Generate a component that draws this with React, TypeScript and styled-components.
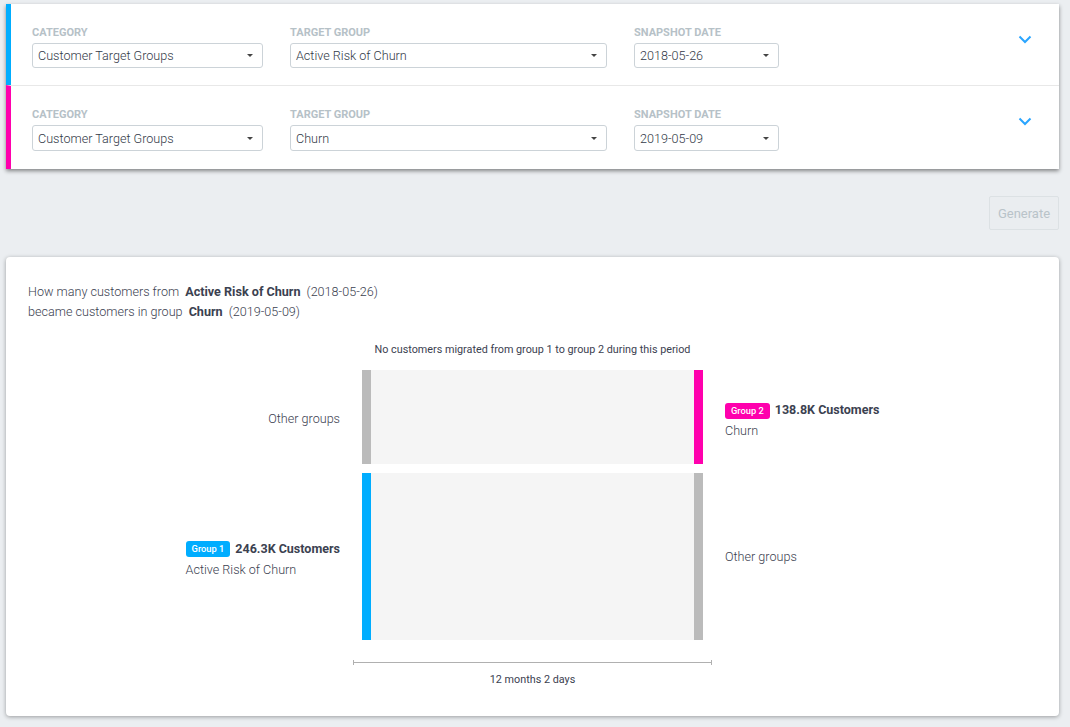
import React from "react";
import styled, { createGlobalStyle } from "styled-components";

const Global = createGlobalStyle`
  html, body { margin: 0; padding: 0; background: #ebeef1; }
  body { font-family: Roboto, "Liberation Sans", sans-serif; color: #3b4150; }
  * { box-sizing: border-box; }
`;

const Page = styled.div`
  width: 1070px;
  height: 727px;
  padding: 4px 11px 0 6px;
  overflow: hidden;
`;

const FilterCard = styled.section`
  background: #fff;
  box-shadow: 0 2px 4px rgba(0, 0, 0, 0.45);
`;

const FilterRow = styled.div<{ $accent: string; $height: number }>`
  display: flex;
  height: ${(p) => p.$height}px;
  padding: 22px 0 0 21px;
  border-left: 5px solid ${(p) => p.$accent};
  & + & {
    border-top: 1px solid #e8e8e8;
  }
`;

const Field = styled.div<{ $width: number }>`
  width: ${(p) => p.$width}px;
  margin-right: 27px;
  flex: none;
`;

const FieldLabel = styled.div`
  font-size: 11px;
  line-height: 14px;
  font-weight: 700;
  color: #b6c1c7;
  margin-bottom: 3px;
`;

const Select = styled.div<{ $height: number }>`
  height: ${(p) => p.$height}px;
  display: flex;
  align-items: center;
  justify-content: space-between;
  padding: 0 9px 0 5px;
  border: 1px solid #ccd3d8;
  border-radius: 3px;
  font-size: 12.6px;
  font-weight: 300;
  color: #333a48;
`;

const Caret = styled.span`
  width: 0;
  height: 0;
  border-left: 3.5px solid transparent;
  border-right: 3.5px solid transparent;
  border-top: 3.5px solid #444;
`;

const ExpandButton = styled.button`
  margin: 8px 27px 0 auto;
  padding: 0;
  border: 0;
  background: none;
  width: 14px;
  height: 10px;
  display: flex;
  color: #2aa5ff;
`;

const Actions = styled.div`
  display: flex;
  justify-content: flex-end;
  margin-top: 27px;
`;

const GenerateButton = styled.button`
  width: 70px;
  height: 34px;
  padding: 0;
  border: 1px solid #dce1e4;
  border-radius: 2px;
  background: #eaedf0;
  font: 400 13px Roboto, sans-serif;
  color: #b9c3c9;
`;

const ResultCard = styled.section`
  margin-top: 27px;
  height: 459px;
  padding: 25px 22px 0;
  background: #fff;
  border-radius: 4px;
  box-shadow: 0 1px 4px rgba(0, 0, 0, 0.35);
`;

const Question = styled.p`
  margin: 0;
  font-size: 12.6px;
  line-height: 20px;
  font-weight: 300;
  color: #3b4150;
  b {
    font-weight: 700;
    margin: 0 3px;
  }
`;

const Chart = styled.div`
  display: grid;
  grid-template-columns: 312px 22px 9px 323px 9px 22px 1fr;
  grid-template-rows: 48px 94px 9px 167px 60px;
`;

const Caption = styled.div`
  grid-column: 3 / 6;
  grid-row: 1;
  align-self: start;
  margin-top: 19px;
  text-align: center;
  font-size: 10.8px;
  line-height: 18px;
  color: #3b4150;
`;

const Bar = styled.div<{ $color: string; $col: number; $row: number }>`
  grid-column: ${(p) => p.$col};
  grid-row: ${(p) => p.$row};
  background: ${(p) => p.$color};
`;

const Flow = styled.div<{ $row: number }>`
  grid-column: 4;
  grid-row: ${(p) => p.$row};
  background: #f5f5f5;
`;

const SideLabel = styled.div<{ $side: "left" | "right"; $row: number; $drop: number }>`
  grid-column: ${(p) => (p.$side === "left" ? 1 : 7)};
  grid-row: ${(p) => p.$row};
  align-self: center;
  justify-self: ${(p) => (p.$side === "left" ? "end" : "start")};
  padding-top: ${(p) => p.$drop}px;
  font-size: 12.6px;
  line-height: 21px;
  font-weight: 300;
`;

const Headline = styled.div`
  display: flex;
  align-items: center;
  gap: 5px;
  margin-top: 2px;
  font-weight: 700;
  font-size: 12.5px;
`;

const Badge = styled.span<{ $color: string }>`
  display: inline-block;
  height: 16px;
  padding: 0 6px;
  margin-top: 2px;
  border-radius: 3px;
  background: ${(p) => p.$color};
  color: #fff;
  font-size: 9.3px;
  line-height: 16px;
  font-weight: 500;
`;

const Axis = styled.div`
  grid-column: 3 / 6;
  grid-row: 5;
  margin: 20px -9px 0;
  text-align: center;
  font-size: 10.8px;
  line-height: 18px;
`;

const AxisLine = styled.div`
  height: 5px;
  margin-bottom: 6px;
  border-left: 1px solid #b0b0b0;
  border-right: 1px solid #b0b0b0;
  background: linear-gradient(#b0b0b0, #b0b0b0) center / 100% 1px no-repeat;
`;

const Chevron = () => (
  <svg width="14" height="10" viewBox="0 0 14 10" fill="none">
    <path d="M1.5 2.5 L7 8 L12.5 2.5" stroke="currentColor" strokeWidth="2" />
  </svg>
);

const filters = [
  { accent: "#00adff", height: 81, selectHeight: 25, group: "Active Risk of Churn", date: "2018-05-26" },
  { accent: "#ff00ad", height: 84, selectHeight: 26, group: "Churn", date: "2019-05-09" },
];

export default function App() {
  return (
    <Page>
      <Global />
      <FilterCard>
        {filters.map((f) => (
          <FilterRow key={f.date} $accent={f.accent} $height={f.height}>
            <Field $width={231}>
              <FieldLabel>CATEGORY</FieldLabel>
              <Select $height={f.selectHeight}>
                Customer Target Groups
                <Caret />
              </Select>
            </Field>
            <Field $width={317}>
              <FieldLabel>TARGET GROUP</FieldLabel>
              <Select $height={f.selectHeight}>
                {f.group}
                <Caret />
              </Select>
            </Field>
            <Field $width={145}>
              <FieldLabel>SNAPSHOT DATE</FieldLabel>
              <Select $height={f.selectHeight}>
                {f.date}
                <Caret />
              </Select>
            </Field>
            <ExpandButton aria-label="Expand">
              <Chevron />
            </ExpandButton>
          </FilterRow>
        ))}
      </FilterCard>
      <Actions>
        <GenerateButton disabled>Generate</GenerateButton>
      </Actions>
      <ResultCard>
        <Question>
          How many customers from <b>Active Risk of Churn</b> (2018-05-26)
          <br />
          became customers in group <b>Churn</b> (2019-05-09)
        </Question>
        <Chart>
          <Caption>No customers migrated from group 1 to group 2 during this period</Caption>
          <SideLabel $side="left" $row={2} $drop={2}>Other groups</SideLabel>
          <Bar $color="#bbbbbb" $col={3} $row={2} />
          <Flow $row={2} />
          <Bar $color="#ff00ad" $col={5} $row={2} />
          <SideLabel $side="right" $row={2} $drop={4}>
            <Headline>
              <Badge $color="#ff00ad">Group 2</Badge>138.8K Customers
            </Headline>
            Churn
          </SideLabel>
          <SideLabel $side="left" $row={4} $drop={2}>
            <Headline>
              <Badge $color="#00adff">Group 1</Badge>246.3K Customers
            </Headline>
            Active Risk of Churn
          </SideLabel>
          <Bar $color="#00adff" $col={3} $row={4} />
          <Flow $row={4} />
          <Bar $color="#bbbbbb" $col={5} $row={4} />
          <SideLabel $side="right" $row={4} $drop={0}>Other groups</SideLabel>
          <Axis>
            <AxisLine />
            12 months 2 days
          </Axis>
        </Chart>
      </ResultCard>
    </Page>
  );
}
